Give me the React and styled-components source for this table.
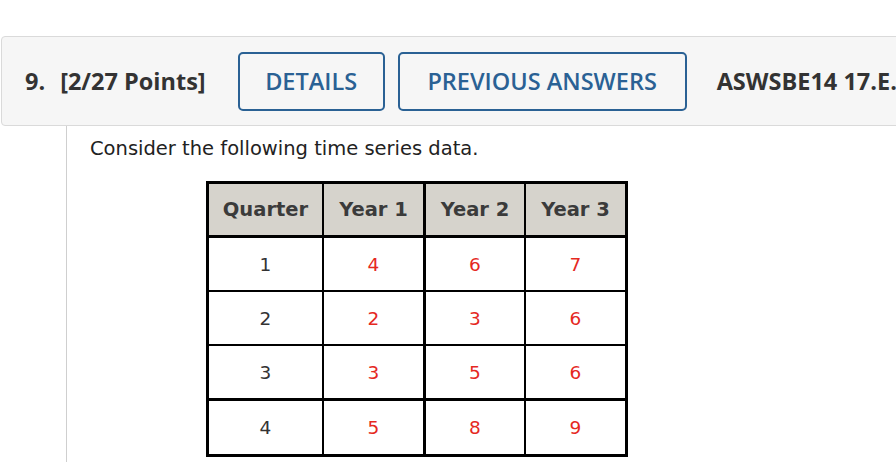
import React from "react";
import styled, { createGlobalStyle } from "styled-components";

const Global = createGlobalStyle`
  html, body { margin: 0; padding: 0; background: #fff; }
  body { overflow: hidden; width: 896px; height: 462px; }
`;

const Page = styled.div`
  padding-top: 36px;
  width: 896px;
  height: 462px;
  box-sizing: border-box;
  overflow: hidden;
`;

const Header = styled.div`
  display: flex;
  align-items: center;
  height: 90px;
  box-sizing: border-box;
  margin-left: 1px;
  width: 1100px;
  background: #f6f6f6;
  border: 1px solid #dadada;
  border-radius: 4px;
  padding-left: 23px;
  font-family: "Open Sans", "Liberation Sans", sans-serif;
  white-space: nowrap;
`;

const Number = styled.span`
  font-weight: 700;
  font-size: 23.5px;
  color: #333;
  margin-right: 15px;
`;

const Points = styled.span`
  font-weight: 700;
  font-size: 23.5px;
  color: #333;
  margin-right: 32px;
`;

const Button = styled.button`
  flex: none;
  height: 59px;
  width: ${(p) => p.$w}px;
  margin-right: ${(p) => p.$mr}px;
  box-sizing: border-box;
  background: transparent;
  border: 2.5px solid #2a6194;
  border-radius: 5px;
  font-family: "Open Sans", "Liberation Sans", sans-serif;
  font-weight: 600;
  font-size: 23.5px;
  color: #2a6194;
  padding: 0;
  cursor: pointer;
`;

const Code = styled.span`
  font-weight: 700;
  font-size: 23.5px;
  color: #333;
`;

const Body = styled.div`
  margin-left: 66px;
  border-left: 1px solid #cfcfcf;
  height: 336px;
  padding: 11px 0 0 23px;
  box-sizing: border-box;
`;

const Prompt = styled.p`
  margin: 0;
  font-family: "DejaVu Sans", Verdana, sans-serif;
  font-size: 19.5px;
  line-height: 23px;
  color: #222;
`;

const Table = styled.table`
  margin: 21px 0 0 116px;
  border-collapse: collapse;
  border: 3px solid #000;
  font-family: "DejaVu Sans", Verdana, sans-serif;
`;

const Th = styled.th`
  background: #d6d3cc;
  color: #3b3b3b;
  font-weight: 700;
  font-size: 19.5px;
  height: 51px;
  width: ${(p) => p.$w}px;
  padding: 0;
  text-align: center;
  border-left: ${(p) => (p.$thick ? 3 : 2)}px solid #000;
  border-bottom: 3px solid #000;
`;

const Td = styled.td`
  height: ${(p) => (p.$last ? 53 : 52)}px;
  padding: 0;
  text-align: center;
  font-size: 18.5px;
  color: ${(p) => (p.$answer ? "#e5291f" : "#333")};
  border-left: ${(p) => (p.$thick ? 3 : 2)}px solid #000;
  border-top: ${(p) => (p.$last ? 3 : 2)}px solid #000;
`;

const cols = [
  { label: "Quarter", w: 113 },
  { label: "Year 1", w: 99 },
  { label: "Year 2", w: 98, thick: true },
  { label: "Year 3", w: 99 },
];

const rows = [
  [1, 4, 6, 7],
  [2, 2, 3, 6],
  [3, 3, 5, 6],
  [4, 5, 8, 9],
];

export default function App() {
  return (
    <Page>
      <Global />
      <Header>
        <Number>9.</Number>
        <Points>[2/27 Points]</Points>
        <Button $w={147} $mr={13}>DETAILS</Button>
        <Button $w={289} $mr={30}>PREVIOUS ANSWERS</Button>
        <Code>ASWSBE14 17.E.010.</Code>
      </Header>
      <Body>
        <Prompt>Consider the following time series data.</Prompt>
        <Table>
          <thead>
            <tr>
              {cols.map((c) => (
                <Th key={c.label} $w={c.w} $thick={c.thick}>
                  {c.label}
                </Th>
              ))}
            </tr>
          </thead>
          <tbody>
            {rows.map((r, i) => (
              <tr key={i}>
                {r.map((v, j) => (
                  <Td
                    key={j}
                    $answer={j > 0}
                    $thick={cols[j].thick}
                    $last={i === 3}
                  >
                    {v}
                  </Td>
                ))}
              </tr>
            ))}
          </tbody>
        </Table>
      </Body>
    </Page>
  );
}
